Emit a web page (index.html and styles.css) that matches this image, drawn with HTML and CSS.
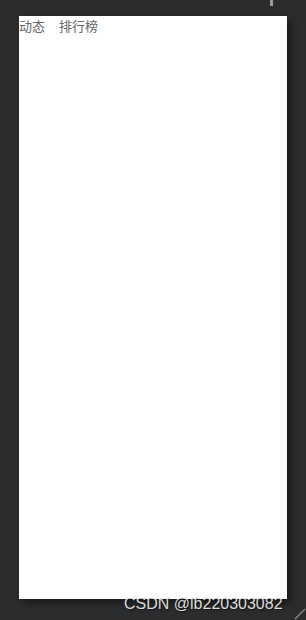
FILE: index.html
```html
<!DOCTYPE html>
<html lang="zh">

<head>
  <meta charset="UTF-8">
  <meta name="viewport" content="width=device-width, initial-scale=1.0">
  <title>动态</title>
  <link rel="stylesheet" href="styles.css">
</head>

<body>
  <div class="handle"></div>
  <!-- phone screen -->
  <div class="screen">
    <div class="tabs">
      <span class="tab">动态</span>
      <span class="tab">排行榜</span>
    </div>
  </div>

  <div class="watermark">CSDN @lb220303082</div>

  <svg class="grip" viewBox="0 0 12 14">
    <path d="M 1 13 L 11 3" stroke="#8a8b8d" stroke-width="1.2" fill="none" />
  </svg>
</body>

</html>
```

FILE: styles.css
```css
html,
body {
  margin: 0;
  height: 100%;
}

body {
  position: relative;
  background-color: #2b2c2e;
  padding: 16px 0 0 19px;
  box-sizing: border-box;
  overflow: hidden;
  font-family: "Noto Sans CJK SC", "Liberation Sans", sans-serif;
}

/* little gray tick at the top edge */
.handle {
  position: absolute;
  top: 0;
  left: 270px;
  width: 3px;
  height: 6px;
  background-color: #9a9b9d;
}

.screen {
  width: 268px;
  height: 583px;
  background-color: #fff;
  box-shadow: 4px 4px 8px rgba(0, 0, 0, 0.45);
}

.tabs {
  display: flex;
  gap: 14px;
  font-size: 13px;
  line-height: 20px;
  color: #666;
}

.watermark {
  position: absolute;
  left: 124px;
  top: 595px;
  font-family: "Liberation Sans", sans-serif;
  font-size: 16px;
  color: rgba(255, 255, 255, 0.85);
  text-shadow: 1px 1px 1px rgba(0, 0, 0, 0.5);
}

.grip {
  position: absolute;
  right: 0;
  bottom: 0;
  width: 12px;
  height: 14px;
}
```
